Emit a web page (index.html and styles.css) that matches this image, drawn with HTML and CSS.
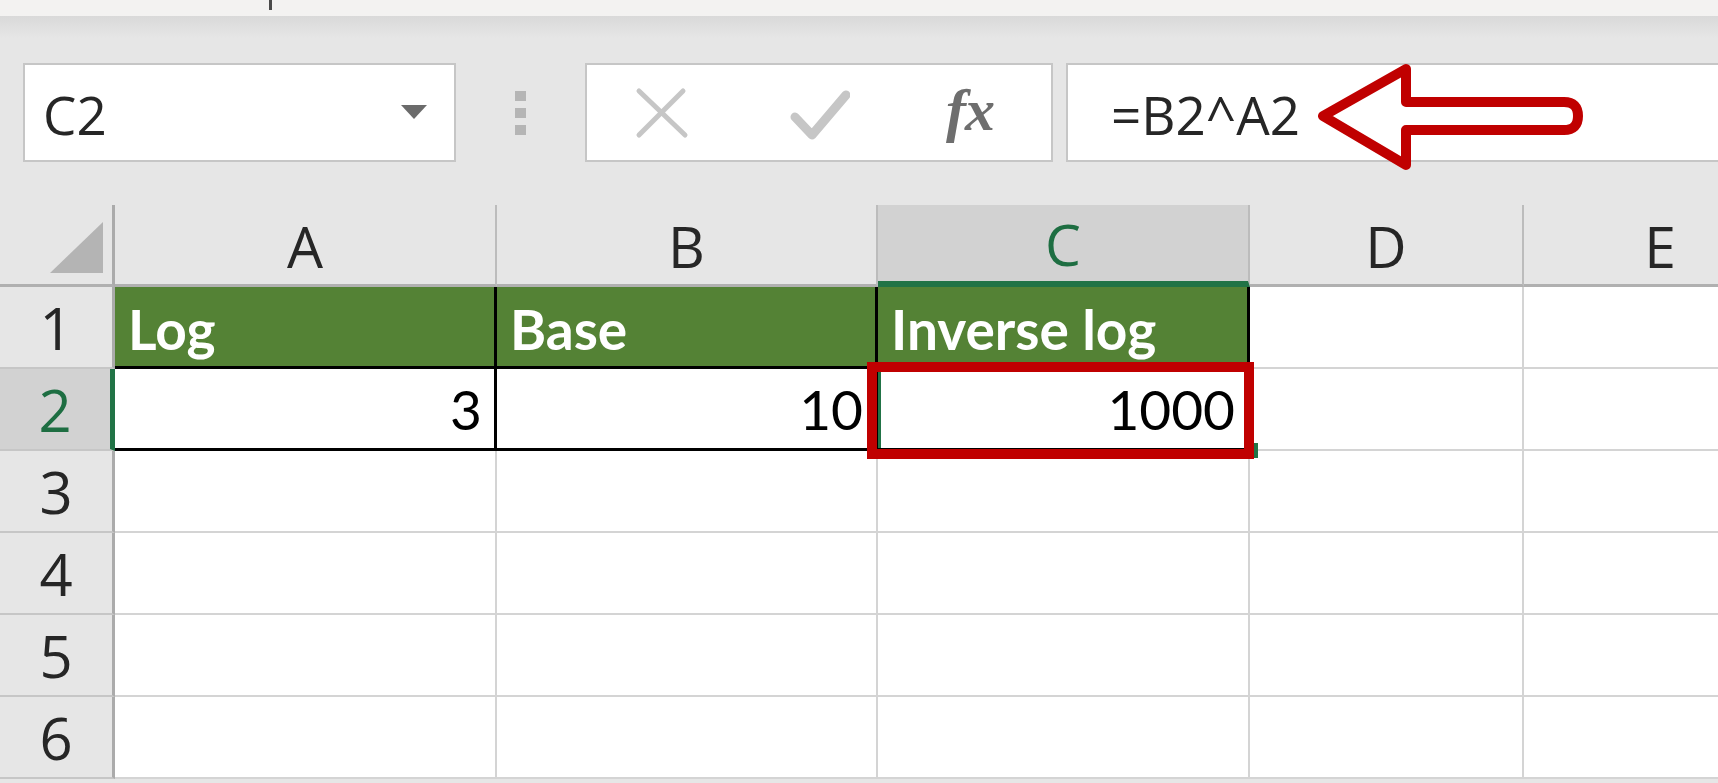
FILE: index.html
```html
<!DOCTYPE html>
<html>
<head>
    <meta charset="UTF-8">
    <title>Inverse log</title>
    <link rel="stylesheet" href="styles.css">
</head>
<body>
    <div class="titlebar"><span class="tick"></span></div>

    <div class="formula-row">
        <div class="name-box">
            <span>C2</span>
            <svg class="drop" width="26" height="14" viewBox="0 0 26 14"><polygon points="0,0 26,0 13,14"/></svg>
        </div>
        <div class="grip"><i></i><i></i><i></i></div>
        <div class="fx-buttons">
            <svg width="54" height="52" viewBox="0 0 54 52" class="btn-icon">
                <path d="M4 4 L50 48 M48 4 L4 48"/>
            </svg>
            <svg width="60" height="52" viewBox="0 0 60 52" class="btn-icon check">
                <path d="M5 28 L22 46 L56 6"/>
            </svg>
            <span class="fx">fx</span>
        </div>
        <div class="formula-box">
            <span>=B2^A2</span>
            <!-- callout arrow -->
            <svg class="arrow" width="300" height="130" viewBox="1300 50 300 130">
                <path d="M1323 116 L1406 69 L1406 102 L1564 102 Q1578 102 1578 116 Q1578 130 1564 130 L1406 130 L1406 165 Z"/>
            </svg>
        </div>
    </div>

    <div class="sheet">
        <div class="corner">
            <svg width="53" height="51" viewBox="0 0 53 51"><polygon points="53,0 53,51 0,51"/></svg>
        </div>
        <div class="col-head">A</div>
        <div class="col-head">B</div>
        <div class="col-head sel">C</div>
        <div class="col-head">D</div>
        <div class="col-head">E</div>

        <div class="row-head">1</div>
        <div class="cell title ruled">Log</div>
        <div class="cell title ruled">Base</div>
        <div class="cell title ruled">Inverse log</div>
        <div class="cell"></div>
        <div class="cell"></div>

        <div class="row-head sel">2</div>
        <div class="cell num ruled">3</div>
        <div class="cell num ruled">10</div>
        <div class="cell num ruled active">
            1000
            <span class="handle"></span>
            <span class="callout"></span>
        </div>
        <div class="cell"></div>
        <div class="cell"></div>

        <div class="row-head">3</div>
        <div class="cell"></div><div class="cell"></div><div class="cell"></div><div class="cell"></div><div class="cell"></div>

        <div class="row-head">4</div>
        <div class="cell"></div><div class="cell"></div><div class="cell"></div><div class="cell"></div><div class="cell"></div>

        <div class="row-head">5</div>
        <div class="cell"></div><div class="cell"></div><div class="cell"></div><div class="cell"></div><div class="cell"></div>

        <div class="row-head">6</div>
        <div class="cell"></div><div class="cell"></div><div class="cell"></div><div class="cell"></div><div class="cell"></div>
    </div>
</body>
</html>
```

FILE: styles.css
```css
* {
    box-sizing: border-box;
}
body {
    margin: 0;
    background: #e6e6e6;
    overflow: hidden;
    font-family: "Open Sans", "Noto Sans", sans-serif;
    color: #262626;
}
.titlebar {
    height: 16px;
    background: #f3f2f1;
    padding-left: 269px;
}
.tick {
    display: block;
    width: 3px;
    height: 10px;
    background: #4a4a4a;
}

/* formula bar */
.formula-row {
    display: flex;
    height: 189px;
    padding: 47px 0 43px 23px;
    background: linear-gradient(#d9d9d9, #e6e6e6 22px);
}
.name-box {
    width: 433px;
    border: 2px solid #c6c6c6;
    background: #fff;
    display: flex;
    align-items: center;
    justify-content: space-between;
    padding: 4px 27px 0 18px;
    font-size: 53px;
}
.drop {
    fill: #6b6b6b;
    margin-top: -6px;
}
.grip {
    width: 11px;
    margin: 0 59px;
    display: flex;
    flex-direction: column;
    justify-content: center;
    gap: 7px;
}
.grip i {
    display: block;
    width: 11px;
    height: 10px;
    background: #b5b5b5;
}
.fx-buttons {
    width: 468px;
    margin-right: 13px;
    border: 2px solid #c6c6c6;
    background: #fff;
    display: grid;
    grid-template-columns: 150px 166px 134px;
    align-items: center;
    justify-items: center;
}
.btn-icon {
    fill: none;
    stroke: #c6c6c6;
    stroke-width: 5;
    stroke-linecap: round;
}
.btn-icon.check {
    stroke-width: 9;
    stroke-linejoin: round;
    margin-top: 4px;
}
.fx {
    font-family: "Liberation Serif", "DejaVu Serif", serif;
    font-style: italic;
    font-weight: bold;
    font-size: 60px;
    color: #6e6e6e;
    letter-spacing: -1px;
    margin-top: -4px;
}
.formula-box {
    flex: 1;
    margin-right: -20px;
    position: relative;
    border: 2px solid #c6c6c6;
    background: #fff;
    display: flex;
    align-items: center;
    padding: 4px 0 0 43px;
    font-size: 53px;
}
.arrow {
    position: absolute;
    left: 232px;
    top: -15px;
    fill: none;
    stroke: #c00000;
    stroke-width: 10;
    stroke-linejoin: round;
}

/* grid */
.sheet {
    display: grid;
    grid-template-columns: 115px 382px 381px 372px 274px 274px;
    grid-auto-rows: 82px;
}
.corner {
    display: flex;
    justify-content: flex-end;
    align-items: flex-end;
    padding: 0 9px 11px 0;
    border-right: 3px solid #ababab;
    border-bottom: 3px solid #b0b0b0;
    fill: #b4b4b4;
}
.col-head {
    display: flex;
    align-items: center;
    justify-content: center;
    font-size: 57px;
    border-right: 2px solid #bcbcbc;
    border-bottom: 3px solid #b0b0b0;
    padding-top: 2px;
}
.col-head.sel {
    background: #d2d2d2;
    color: #1e6e42;
    border-bottom: 6px solid #217346;
}
.row-head {
    display: flex;
    align-items: center;
    justify-content: center;
    font-size: 58px;
    border-right: 3px solid #ababab;
    border-bottom: 2px solid #c6c6c6;
}
.row-head.sel {
    background: #d2d2d2;
    color: #1e6e42;
    border-right: 5px solid #217346;
}
.cell {
    display: flex;
    align-items: flex-end;
    font-family: Lato, "Liberation Sans", sans-serif;
    font-size: 55px;
    line-height: 55px;
    color: #000;
    padding: 0 12px 11px 13px;
    border-right: 2px solid #d4d4d4;
    border-bottom: 2px solid #d4d4d4;
    background: #fff;
}
.cell.title {
    background: #548235;
    color: #fff;
    font-weight: bold;
    padding-bottom: 9px;
}
.cell.num {
    justify-content: flex-end;
}
.cell.ruled {
    border-right: 3px solid #000;
    border-bottom: 3px solid #000;
}
.cell.active {
    position: relative;
    box-shadow: inset 3px 0 0 #217346;
}
.handle {
    position: absolute;
    left: 366px;
    top: 74px;
    width: 14px;
    height: 15px;
    background: #217346;
}
.callout {
    position: absolute;
    left: -11px;
    top: -7px;
    width: 387px;
    height: 97px;
    border: 10px solid #c00000;
}
```
